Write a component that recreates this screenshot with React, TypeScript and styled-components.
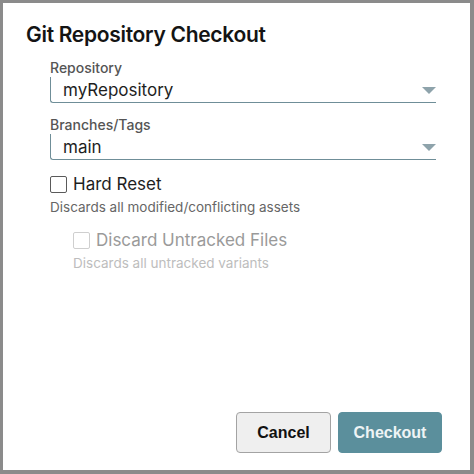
import { createGlobalStyle } from "styled-components";
import styled from "styled-components";

const GlobalStyle = createGlobalStyle`
    html, body {
        margin: 0;
        padding: 0;
        background: #8b8b8b;
    }
    * {
        box-sizing: border-box;
    }
`;

const Dialog = styled.div`
    margin: 3px 4px 4px 3px;
    width: 467px;
    height: 467px;
    background: #ffffff;
    display: flex;
    flex-direction: column;
    padding: 20px 28px 17px 23px;
    font-family: Inter, "Noto Sans", sans-serif;
`;

const Title = styled.h1`
    margin: 0;
    font-size: 21px;
    line-height: 24px;
    font-weight: 600;
    color: #141414;
    letter-spacing: -0.3px;
`;

const Form = styled.div`
    display: flex;
    flex-direction: column;
    padding-left: 24px;
    margin: 12px 6px 0 0;
`;

const Field = styled.div`
    display: flex;
    flex-direction: column;
    margin-bottom: 13px;
`;

const Label = styled.label`
    font-size: 14px;
    line-height: 18px;
    font-weight: 500;
    color: #555555;
`;

const Select = styled.div`
    display: flex;
    align-items: center;
    justify-content: space-between;
    height: 26px;
    border-left: 1px solid #6f8e98;
    border-bottom: 1.5px solid #6f8e98;
    border-bottom-left-radius: 3px;
    padding: 0 0 0 12px;
`;

const SelectValue = styled.span`
    font-size: 17px;
    line-height: 22px;
    color: #1e1e1e;
`;

const Arrow = styled.span`
    width: 0;
    height: 0;
    border-left: 7px solid transparent;
    border-right: 7px solid transparent;
    border-top: 7px solid #8ea3ab;
    margin-top: 2px;
`;

const Option = styled.div<{ $nested?: boolean }>`
    display: flex;
    flex-direction: column;
    margin-left: ${(p) => (p.$nested ? "23px" : "0")};
    margin-top: ${(p) => (p.$nested ? "13px" : "0")};
`;

const CheckRow = styled.label`
    display: flex;
    align-items: center;
    gap: 6px;
`;

const Box = styled.span<{ $disabled?: boolean }>`
    width: 17px;
    height: 17px;
    border: 1.5px solid ${(p) => (p.$disabled ? "#cfcfcf" : "#5a5a5a")};
    border-radius: 2px;
    background: #ffffff;
`;

const CheckText = styled.span<{ $disabled?: boolean }>`
    font-size: 17px;
    line-height: 22px;
    color: ${(p) => (p.$disabled ? "#9a9a9a" : "#1e1e1e")};
`;

const Hint = styled.div<{ $disabled?: boolean }>`
    margin-top: 3px;
    font-size: 13.5px;
    line-height: 18px;
    color: ${(p) => (p.$disabled ? "#bdbdbd" : "#666666")};
`;

const Footer = styled.div`
    margin-top: auto;
    display: flex;
    justify-content: flex-end;
    gap: 7px;
    font-family: "Liberation Sans", Arial, sans-serif;
`;

const Button = styled.button<{ $primary?: boolean }>`
    height: 41px;
    padding: 0 14px;
    border-radius: 4px;
    font-family: inherit;
    font-size: 16px;
    font-weight: 700;
    border: 1px solid ${(p) => (p.$primary ? "#5b8f9c" : "#a3a3a3")};
    background: ${(p) => (p.$primary ? "#5b8f9c" : "#efefef")};
    color: ${(p) => (p.$primary ? "#eef4f5" : "#111111")};
`;

export default function App() {
    return (
        <>
            <GlobalStyle />
            <Dialog>
                <Title>Git Repository Checkout</Title>
                <Form>
                    <Field>
                        <Label>Repository</Label>
                        <Select>
                            <SelectValue>myRepository</SelectValue>
                            <Arrow />
                        </Select>
                    </Field>
                    <Field>
                        <Label>Branches/Tags</Label>
                        <Select>
                            <SelectValue>main</SelectValue>
                            <Arrow />
                        </Select>
                    </Field>
                    <Option>
                        <CheckRow>
                            <Box />
                            <CheckText>Hard Reset</CheckText>
                        </CheckRow>
                        <Hint>Discards all modified/conflicting assets</Hint>
                    </Option>
                    <Option $nested>
                        <CheckRow>
                            <Box $disabled />
                            <CheckText $disabled>Discard Untracked Files</CheckText>
                        </CheckRow>
                        <Hint $disabled>Discards all untracked variants</Hint>
                    </Option>
                </Form>
                <Footer>
                    <Button style={{ width: 95 }}>Cancel</Button>
                    <Button $primary style={{ width: 104 }}>
                        Checkout
                    </Button>
                </Footer>
            </Dialog>
        </>
    );
}
